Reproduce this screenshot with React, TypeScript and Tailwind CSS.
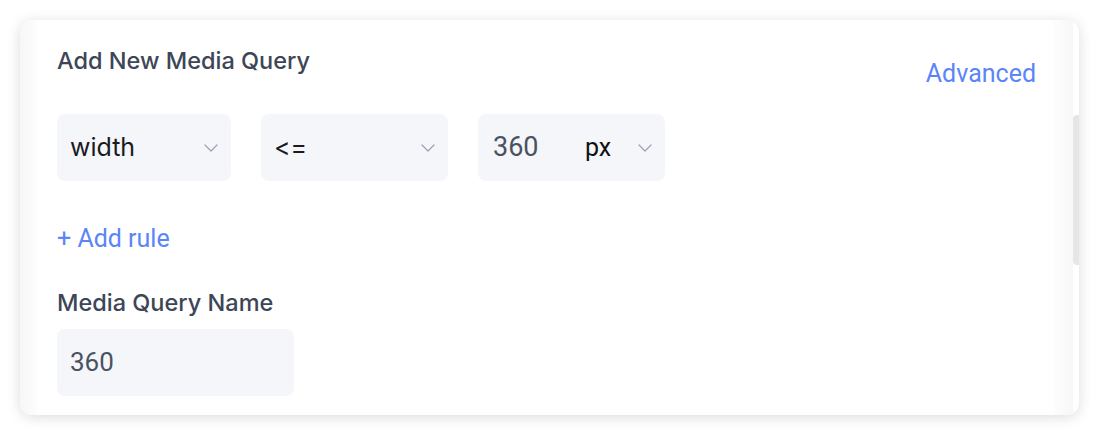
import { ChevronDown } from 'lucide-react'

type SelectBoxProps = {
    value: string
    width: string
}

function SelectBox({ value, width }: SelectBoxProps) {
    return (
        <div className={`${width} h-[67px] rounded-lg bg-[#f5f6fa] flex items-center justify-between pl-[13px] pr-[8px]`}>
            <span className="font-['Inter'] text-[25px] text-[#1b1b1f]">{value}</span>
            <ChevronDown className="w-[24px] h-[24px] text-[#9ba1b5]" strokeWidth={1.2} />
        </div>
    )
}

export default function App() {
    return (
        <div className="w-[1099px] h-[436px] bg-white p-[20px] pr-[20px]">
            <div className="h-[395px] rounded-xl bg-white shadow-[0_2px_14px_rgba(0,0,0,0.14)] flex overflow-hidden">
                <div className="w-[18px] bg-gradient-to-r from-[#f7f7f7] to-[#fdfdfd]" />

                <div className="flex-1 pl-[19px] pr-[18px] pt-[25px]">
                    <div className="flex items-start justify-between">
                        <h2 className="font-['Inter'] font-medium text-[23.5px] leading-[32px] text-[#3d4656]">
                            Add New Media Query
                        </h2>
                        <a className="mt-[13px] font-['Roboto'] text-[25px] leading-[32px] text-[#5a84f8]">
                            Advanced
                        </a>
                    </div>

                    <div className="mt-[24px] flex gap-[30px]">
                        <SelectBox value="width" width="w-[174px]" />
                        <SelectBox value="<=" width="w-[187px]" />
                        <div className="w-[187px] h-[67px] rounded-lg bg-[#f5f6fa] flex items-center pl-[15px] pr-[8px]">
                            <span className="font-['Roboto'] text-[27px] text-[#4a5261] w-[92px]">360</span>
                            <span className="flex-1 font-['Roboto'] text-[25px] text-[#111]">px</span>
                            <ChevronDown className="w-[24px] h-[24px] text-[#9ba1b5]" strokeWidth={1.2} />
                        </div>
                    </div>

                    <div className="mt-[42px] font-['Roboto'] text-[25px] leading-[32px] text-[#5a84f8]">
                        + Add rule
                    </div>

                    <div className="mt-[32px] font-['Inter'] font-medium text-[23.5px] leading-[32px] text-[#3d4656]">
                        Media Query Name
                    </div>

                    <div className="mt-[10px] w-[237px] h-[67px] rounded-lg bg-[#f5f6fa] flex items-center pl-[13px]">
                        <span className="font-['Roboto'] text-[26px] text-[#4a5261]">360</span>
                    </div>
                </div>

                <div className="w-[19px] bg-gradient-to-r from-[#fdfdfd] to-[#f7f7f7]" />
                <div className="w-[6px] pt-[95px]">
                    <div className="h-[150px] rounded-l bg-[#e6e6e6]" />
                </div>
            </div>
        </div>
    )
}
